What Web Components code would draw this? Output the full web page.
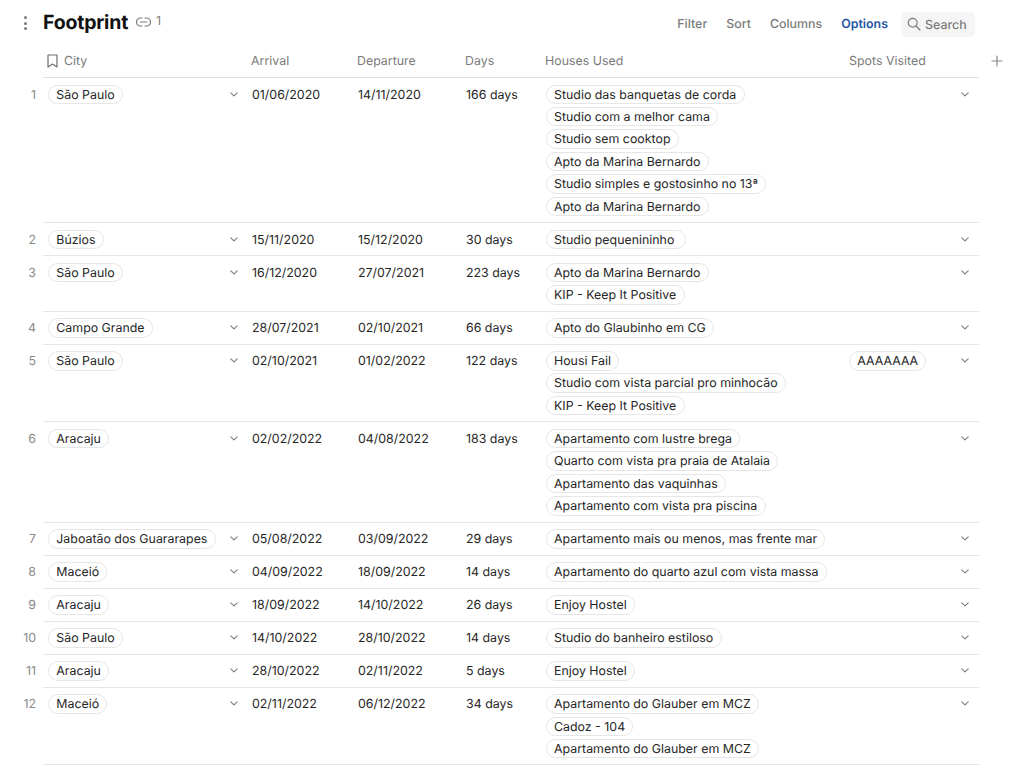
<!DOCTYPE html>
<html>
<head>
<meta charset="utf-8">
<title>Footprint</title>
<style>
html, body { margin: 0; padding: 0; background: #fff; overflow: hidden; height: 769px; }
body { font-family: Inter, "Liberation Sans", sans-serif; color: #262626; text-rendering: geometricPrecision; }
</style>
</head>
<body>
<foot-toolbar></foot-toolbar>
<foot-table></foot-table>

<script>
const chevron = `<svg width="8" height="5" viewBox="0 0 8 5" fill="none" stroke="#7d7d7d" stroke-width="1.1" stroke-linecap="round" stroke-linejoin="round"><path d="M.8.9 4 3.9 7.2.9"/></svg>`;

const rows = [
  ['São Paulo', '01/06/2020', '14/11/2020', '166 days', ['Studio das banquetas de corda', 'Studio com a melhor cama', 'Studio sem cooktop', 'Apto da Marina Bernardo', 'Studio simples e gostosinho no 13ª', 'Apto da Marina Bernardo'], []],
  ['Búzios', '15/11/2020', '15/12/2020', '30 days', ['Studio pequenininho '], []],
  ['São Paulo', '16/12/2020', '27/07/2021', '223 days', ['Apto da Marina Bernardo', 'KIP - Keep It Positive'], []],
  ['Campo Grande', '28/07/2021', '02/10/2021', '66 days', ['Apto do Glaubinho em CG'], []],
  ['São Paulo', '02/10/2021', '01/02/2022', '122 days', ['Housi Fail', 'Studio com vista parcial pro minhocão', 'KIP - Keep It Positive'], ['AAAAAAA']],
  ['Aracaju', '02/02/2022', '04/08/2022', '183 days', ['Apartamento com lustre brega', 'Quarto com vista pra praia de Atalaia', 'Apartamento das vaquinhas', 'Apartamento com vista pra piscina'], []],
  ['Jaboatão dos Guararapes', '05/08/2022', '03/09/2022', '29 days', ['Apartamento mais ou menos, mas frente mar'], []],
  ['Maceió', '04/09/2022', '18/09/2022', '14 days', ['Apartamento do quarto azul com vista massa'], []],
  ['Aracaju', '18/09/2022', '14/10/2022', '26 days', ['Enjoy Hostel'], []],
  ['São Paulo', '14/10/2022', '28/10/2022', '14 days', ['Studio do banheiro estiloso'], []],
  ['Aracaju', '28/10/2022', '02/11/2022', '5 days', ['Enjoy Hostel'], []],
  ['Maceió', '02/11/2022', '06/12/2022', '34 days', ['Apartamento do Glauber em MCZ', 'Cadoz - 104', 'Apartamento do Glauber em MCZ'], []]
];

class FootToolbar extends HTMLElement {
  constructor() {
    super();
    this.attachShadow({ mode: 'open' });
    this.shadowRoot.innerHTML = `
    <style>
      :host { display: flex; align-items: flex-start; height: 44px; padding: 0 49px 0 22px; }
      .dots { width: 21px; display: flex; flex-direction: column; gap: 2.5px; margin-top: 16px; }
      .dots i { width: 3px; height: 3px; border-radius: 50%; background: #7a7a7a; margin-left: 1.5px; }
      h1 { margin: 10px 0 0; font-size: 19.5px; line-height: 24px; font-weight: 700; letter-spacing: -.2px; color: #111; }
      .links { display: flex; align-items: center; margin: 14px 0 0 8px; gap: 5px; color: #808080; font-size: 12.5px; }
      .spacer { flex: 1; }
      a { font-size: 12.4px; line-height: 16px; font-weight: 500; color: #7b7b7b; margin: 16px 19px 0 0; }
      a.on { color: #1f55a6; font-weight: 600; margin-right: 13px; }
      .search { display: flex; align-items: center; gap: 4px; height: 25px; width: 74px; margin-top: 11.5px; box-sizing: border-box; padding-left: 6px; border-radius: 5px; background: #f5f5f5; color: #7b7b7b; font-size: 12.4px; font-weight: 500; }
    </style>
    <div class="dots"><i></i><i></i><i></i></div>
    <h1>Footprint</h1>
    <div class="links">
      <svg width="15" height="10" viewBox="0 0 15 10" fill="none" stroke="#7b7b7b" stroke-width="1.2" stroke-linecap="round"><path d="M6 1H4.500a4 4 0 0 0 0 8H6M9 1h1.500a4 4 0 0 1 0 8H9M4.500 5h6"/></svg>
      <span>1</span>
    </div>
    <div class="spacer"></div>
    <a>Filter</a><a>Sort</a><a>Columns</a><a class="on">Options</a>
    <div class="search">
      <svg width="14" height="14" viewBox="0 0 14 14" fill="none" stroke="#7b7b7b" stroke-width="1.2" stroke-linecap="round"><circle cx="5.700" cy="5.700" r="4.400"/><path d="M9 9l4 4"/></svg>
      <span>Search</span>
    </div>`;
  }
}

class FootChip extends HTMLElement {
  constructor() {
    super();
    this.attachShadow({ mode: 'open' });
    this.shadowRoot.innerHTML = `
    <style>
      :host { display: inline-flex; align-items: center; box-sizing: border-box; height: 19.5px; padding: 0 7.3px; border: 1px solid #e6e6e6; border-radius: 10px; font-size: 12.38px; white-space: pre; color: #262626; }
    </style>
    <slot></slot>`;
  }
}

class FootRow extends HTMLElement {
  constructor() {
    super();
    this.attachShadow({ mode: 'open' });
    this.shadowRoot.innerHTML = `
    <style>
      :host { display: flex; font-size: 12.4px; color: #262626; }
      .num { width: 36px; flex: none; text-align: right; padding-top: 6.5px; line-height: 19.5px; color: #8a8a8a; margin-right: 7px; }
      .grid { flex: none; width: 936px; display: grid; grid-template-columns: 208px 106px 108px 80px 304px 130px; padding: 6.5px 0 6px; border-bottom: 1px solid #e6e6e6; }
      .cell { line-height: 19.5px; padding-left: 1px; }
      .stack { display: flex; flex-direction: column; align-items: flex-start; gap: 2.93px; position: relative; }
      .city { padding-left: 5px; }
      .houses, .spots { padding-left: 0; }
      .chev { position: absolute; top: 7px; display: flex; }
      .city .chev { right: 13px; }
      .spots .chev { right: 10px; }
    </style>
    <div class="num"></div>
    <div class="grid">
      <div class="cell stack city"><span class="chev">${chevron}</span></div>
      <div class="cell arr"></div>
      <div class="cell dep"></div>
      <div class="cell days"></div>
      <div class="cell stack houses" style="padding-left:1px;margin-left:-.3px"></div>
      <div class="cell stack spots"><span class="chev">${chevron}</span></div>
    </div>`;
  }
  set data(d) {
    const $ = s => this.shadowRoot.querySelector(s);
    const chip = (parent, text) => {
      const c = document.createElement('foot-chip');
      c.textContent = text;
      parent.appendChild(c);
    };
    $('.num').textContent = d.n;
    chip($('.city'), d.row[0]);
    $('.arr').textContent = d.row[1];
    $('.dep').textContent = d.row[2];
    $('.days').textContent = d.row[3];
    d.row[4].forEach(t => chip($('.houses'), t));
    d.row[5].forEach(t => chip($('.spots'), t));
  }
}

class FootTable extends HTMLElement {
  constructor() {
    super();
    this.attachShadow({ mode: 'open' });
    this.shadowRoot.innerHTML = `
    <style>
      :host { display: block; }
      .head { display: flex; align-items: flex-start; margin-left: 43px; }
      .cols { flex: none; width: 936px; height: 34px; box-sizing: border-box; display: grid; grid-template-columns: 208px 106px 108px 80px 304px 130px; align-items: center; border-bottom: 1px solid #dedede; color: #7b7b7b; font-size: 12.4px; }
      .first { display: flex; align-items: center; gap: 6px; padding-left: 4px; }
      .plus { margin: 11px 0 0 12px; display: flex; }
    </style>
    <div class="head">
      <div class="cols">
        <div class="first"><svg width="11" height="14" viewBox="0 0 11 14" fill="none" stroke="#6f6f6f" stroke-width="1.2" stroke-linejoin="round"><path d="M1 1h9v12L5.500 10 1 13z"/></svg><span>City</span></div>
        <div>Arrival</div><div>Departure</div><div>Days</div><div>Houses Used</div><div>Spots Visited</div>
      </div>
      <div class="plus"><svg width="12" height="12" viewBox="0 0 12 12" stroke="#8a8a8a" stroke-width="1.2" stroke-linecap="round"><path d="M6 1v10M1 6h10"/></svg></div>
    </div>
    <div class="body"></div>`;
    const body = this.shadowRoot.querySelector('.body');
    rows.forEach((row, i) => {
      const r = document.createElement('foot-row');
      body.appendChild(r);
      r.data = { n: i + 1, row };
    });
  }
}

customElements.define('foot-toolbar', FootToolbar);
customElements.define('foot-chip', FootChip);
customElements.define('foot-row', FootRow);
customElements.define('foot-table', FootTable);
</script>
</body>
</html>
